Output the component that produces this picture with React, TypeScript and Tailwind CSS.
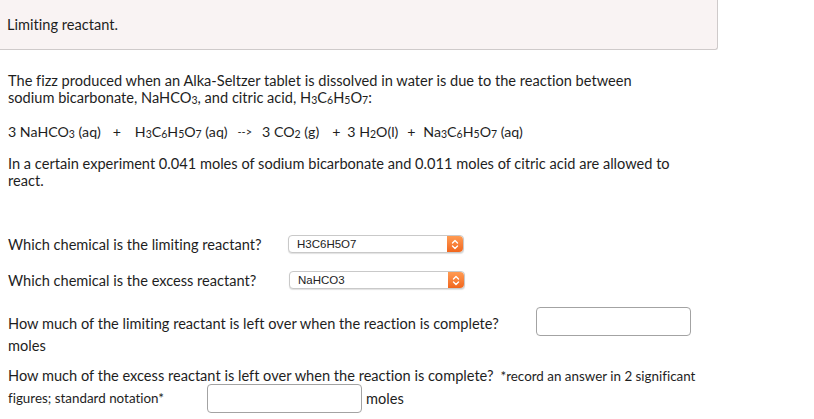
import { useState } from "react";

function Sub({ children }: { children: React.ReactNode }) {
  return <sub className="relative top-[1px] align-baseline text-[10.5px]">{children}</sub>;
}

function Select({ value }: { value: string }) {
  return (
    <div className="flex h-[18px] w-[176px] items-stretch rounded-[4px] border border-[#c9c9c9] bg-white shadow-[0_1px_1px_rgba(0,0,0,0.12)]">
      <div className="flex flex-1 items-center pl-[8px] font-['Liberation_Sans',sans-serif] text-[11.5px] text-[#222]">
        {value}
      </div>
      <div className="flex w-[16px] items-center justify-center rounded-r-[4px] bg-gradient-to-b from-[#ff9b52] to-[#f1661c]">
        <svg width="8" height="11" viewBox="0 0 8 11" fill="none" stroke="white" strokeWidth="1.4" strokeLinecap="round" strokeLinejoin="round">
          <path d="M1.5 4 L4 1.5 L6.5 4" />
          <path d="M1.5 7 L4 9.5 L6.5 7" />
        </svg>
      </div>
    </div>
  );
}

function Box() {
  const [val, setVal] = useState("");
  return (
    <input
      value={val}
      onChange={(e) => setVal(e.target.value)}
      className="h-[29px] w-[155px] rounded-[4px] border border-[#a3a3a3] bg-white px-2 outline-none"
    />
  );
}

export default function App() {
  return (
    <div className="min-h-screen bg-white font-['Lato','Open_Sans',sans-serif] text-[14.6px] leading-[17px] text-[#1e1e1e] [font-variant-ligatures:none]">
      {/* Title bar */}
      <div className="flex h-[50px] w-[718px] items-center rounded-br-[3px] border-r border-b border-[#cfcaca] bg-[#f9f3f3] pl-[7px]">
        Limiting reactant.
      </div>

      <div className="pl-[8px]">
        <p className="mt-[22px] w-[700px]">
          The fizz produced when an Alka-Seltzer tablet is dissolved in water is due to the reaction between
          <br />
          sodium bicarbonate, NaHCO<Sub>3</Sub>, and citric acid, H<Sub>3</Sub>C<Sub>6</Sub>H<Sub>5</Sub>O<Sub>7</Sub>:
        </p>

        {/* Equation */}
        <div className="mt-[17px] flex items-center whitespace-nowrap text-[14.2px]">
          <span>3 NaHCO<Sub>3</Sub> (aq)</span>
          <span className="ml-[8px] w-[16px] text-center">+</span>
          <span className="ml-[10px]">H<Sub>3</Sub>C<Sub>6</Sub>H<Sub>5</Sub>O<Sub>7</Sub> (aq)</span>
          <span className="ml-[10px] text-[11px]">--&gt;</span>
          <span className="ml-[10px]">3 CO<Sub>2</Sub> (g)</span>
          <span className="ml-[9px] w-[16px] text-center">+</span>
          <span className="ml-[3px]">3 H<Sub>2</Sub>O(l)</span>
          <span className="ml-[5px] w-[16px] text-center">+</span>
          <span className="ml-[4px]">Na<Sub>3</Sub>C<Sub>6</Sub>H<Sub>5</Sub>O<Sub>7</Sub> (aq)</span>
        </div>

        <p className="mt-[15px]">
          In a certain experiment 0.041 moles of sodium bicarbonate and 0.011 moles of citric acid are allowed to
          <br />
          react.
        </p>

        {/* Dropdown questions */}
        <div className="mt-[46px] grid grid-cols-[280px_auto] items-center gap-y-[18px]">
          <span>Which chemical is the limiting reactant?</span>
          <Select value="H3C6H5O7" />
          <span>Which chemical is the excess reactant?</span>
          <div className="pl-[1px]">
            <Select value="NaHCO3" />
          </div>
        </div>

        {/* Leftover questions */}
        <div className="mt-[18px] flex items-center">
          <span className="w-[528px] pt-[3px]">How much of the limiting reactant is left over when the reaction is complete?</span>
          <Box />
        </div>
        <div className="mt-[1px]">moles</div>

        <div className="mt-[13px] flex items-baseline">
          <span>How much of the excess reactant is left over when the reaction is complete?</span>
          <span className="ml-[7px] text-[13.4px]">*record an answer in 2 significant</span>
        </div>
        <div className="-mt-[1px] flex items-center">
          <span className="w-[199px] text-[13.4px]">figures; standard notation*</span>
          <Box />
          <span className="ml-[4px]">moles</span>
        </div>
      </div>
    </div>
  );
}
